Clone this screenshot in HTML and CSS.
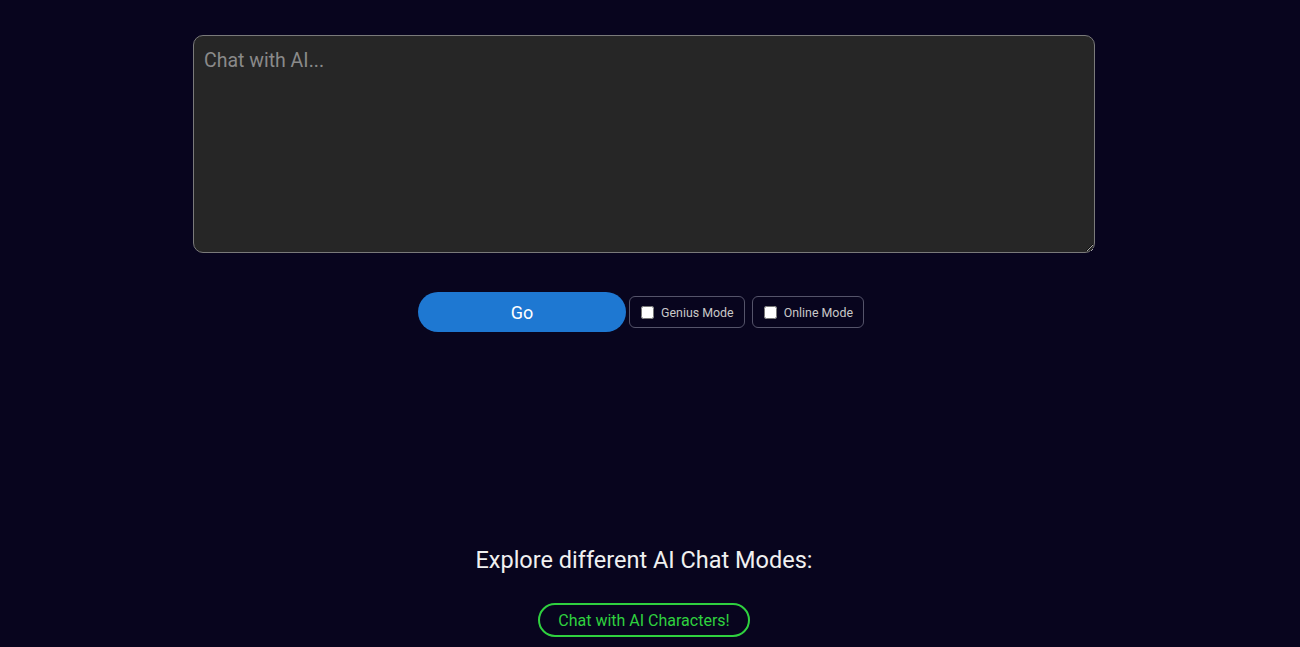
FILE: index.html
```html
<!DOCTYPE html>
<html lang="en">

<head>
    <meta charset="UTF-8">
    <meta name="viewport" content="width=device-width, initial-scale=1.0">
    <title>AI Chat</title>
    <link rel="stylesheet" href="styles.css">
</head>

<body>
    <div class="page">
        <textarea id="prompt" placeholder="Chat with AI..."></textarea>

        <div class="controls">
            <button id="go">Go</button>
            <label class="mode"><input type="checkbox" id="genius"> Genius Mode</label>
            <label class="mode"><input type="checkbox" id="online"> Online Mode</label>
        </div>

        <div class="explore">
            <h2>Explore different AI Chat Modes:</h2>
            <a class="mode-link" href="#">Chat with AI Characters!</a>
        </div>
    </div>
</body>

</html>
```

FILE: styles.css
```css
body {
    margin: 0;
    background: #08051e;
    font-family: Roboto, "Noto Sans", sans-serif;
    color: #eee;
}

.page {
    display: flex;
    flex-direction: column;
    align-items: center;
    padding: 35px 12px 0 0;
}

textarea {
    width: 902px;
    height: 218px;
    box-sizing: border-box;
    padding: 13px 10px;
    background: #262626;
    border: 1px solid #7a7a7a;
    border-radius: 10px;
    color: #ddd;
    font-family: inherit;
    font-size: 19.5px;
    outline: none;
}

textarea::placeholder {
    color: #8a8a8a;
}

.controls {
    display: flex;
    align-items: center;
    margin-top: 39px;
    margin-left: -6px;
}

#go {
    width: 208px;
    height: 40px;
    border: none;
    border-radius: 20px;
    background: #1e78d2;
    color: #fff;
    font-family: inherit;
    font-size: 18px;
    margin-right: 3px;
}

.mode {
    display: flex;
    align-items: center;
    height: 32px;
    box-sizing: border-box;
    padding: 0 10px 0 11px;
    margin-right: 7px;
    border: 1px solid #55546a;
    border-radius: 6px;
    color: #c8c8c8;
    font-size: 12.4px;
}

.mode:last-child {
    margin-right: 0;
}

.mode input {
    width: 13px;
    height: 13px;
    margin: 0 7px 0 0;
}

.explore {
    display: flex;
    flex-direction: column;
    align-items: center;
    margin-top: 213px;
}

.explore h2 {
    margin: 0;
    font-size: 23.5px;
    line-height: 30px;
    font-weight: 400;
    color: #f0f0f0;
}

.mode-link {
    margin-top: 28px;
    width: 212px;
    height: 34px;
    box-sizing: border-box;
    border: 2px solid #2fd13f;
    border-radius: 17px;
    color: #2fd13f;
    text-decoration: none;
    font-size: 16px;
    display: flex;
    align-items: center;
    justify-content: center;
}
```
